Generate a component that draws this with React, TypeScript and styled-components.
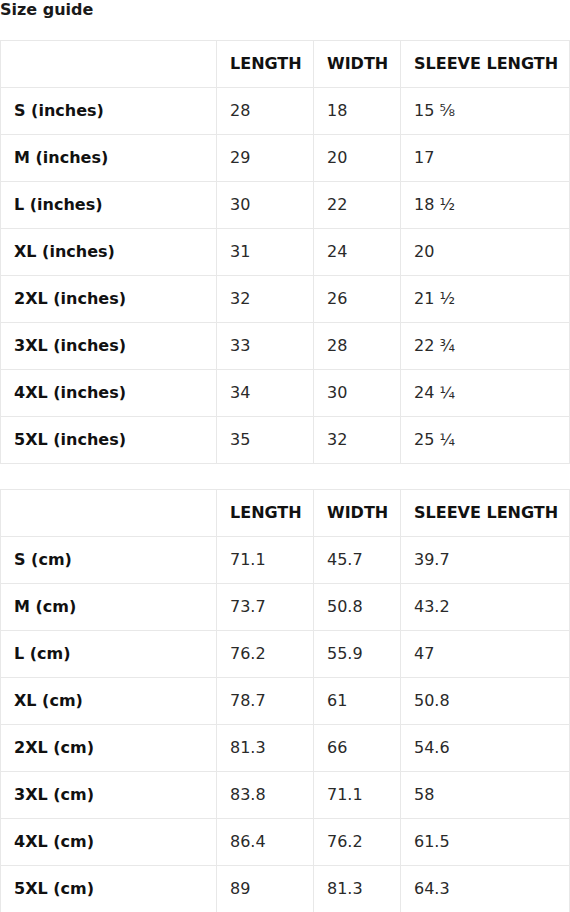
import React from "react";
import styled, { createGlobalStyle } from "styled-components";

const GlobalStyle = createGlobalStyle`
  body {
    margin: 0;
    background: #ffffff;
    font-family: "DejaVu Sans", "Noto Sans", sans-serif;
    color: #1a1a1a;
  }
`;

const Page = styled.div`
  display: flex;
  flex-direction: column;
  row-gap: 25px;
  width: 570px;
`;

const Title = styled.div`
  font-size: 16px;
  font-weight: bold;
  line-height: 19px;
  margin-bottom: -4px;
`;

const Table = styled.table`
  width: 569px;
  border-collapse: collapse;
  table-layout: fixed;
  font-size: 16px;
`;

const Col = styled.col<{ $width: number }>`
  width: ${(p) => p.$width}px;
`;

const Cell = styled.td<{ $bold?: boolean }>`
  border: 1px solid #e8e8e8;
  padding: 14px 13px;
  line-height: 18px;
  text-align: left;
  font-weight: ${(p) => (p.$bold ? "bold" : "normal")};
  color: ${(p) => (p.$bold ? "#111111" : "#2a2a2a")};
  white-space: nowrap;
`;

const headers = ["LENGTH", "WIDTH", "SLEEVE LENGTH"];

const inches: [string, string, string, string][] = [
  ["S (inches)", "28", "18", "15 ⅝"],
  ["M (inches)", "29", "20", "17"],
  ["L (inches)", "30", "22", "18 ½"],
  ["XL (inches)", "31", "24", "20"],
  ["2XL (inches)", "32", "26", "21 ½"],
  ["3XL (inches)", "33", "28", "22 ¾"],
  ["4XL (inches)", "34", "30", "24 ¼"],
  ["5XL (inches)", "35", "32", "25 ¼"],
];

const cm: [string, string, string, string][] = [
  ["S (cm)", "71.1", "45.7", "39.7"],
  ["M (cm)", "73.7", "50.8", "43.2"],
  ["L (cm)", "76.2", "55.9", "47"],
  ["XL (cm)", "78.7", "61", "50.8"],
  ["2XL (cm)", "81.3", "66", "54.6"],
  ["3XL (cm)", "83.8", "71.1", "58"],
  ["4XL (cm)", "86.4", "76.2", "61.5"],
  ["5XL (cm)", "89", "81.3", "64.3"],
];

const SizeTable = ({ rows }: { rows: [string, string, string, string][] }) => (
  <Table>
    <colgroup>
      <Col $width={216} />
      <Col $width={97} />
      <Col $width={87} />
      <Col $width={169} />
    </colgroup>
    <tbody>
      <tr>
        <Cell $bold></Cell>
        {headers.map((h) => (
          <Cell key={h} $bold>
            {h}
          </Cell>
        ))}
      </tr>
      {rows.map(([label, ...values]) => (
        <tr key={label}>
          <Cell $bold>{label}</Cell>
          {values.map((v, i) => (
            <Cell key={i}>{v}</Cell>
          ))}
        </tr>
      ))}
    </tbody>
  </Table>
);

export default function App() {
  return (
    <>
      <GlobalStyle />
      <Page>
        <Title>Size guide</Title>
        <SizeTable rows={inches} />
        <SizeTable rows={cm} />
      </Page>
    </>
  );
}
